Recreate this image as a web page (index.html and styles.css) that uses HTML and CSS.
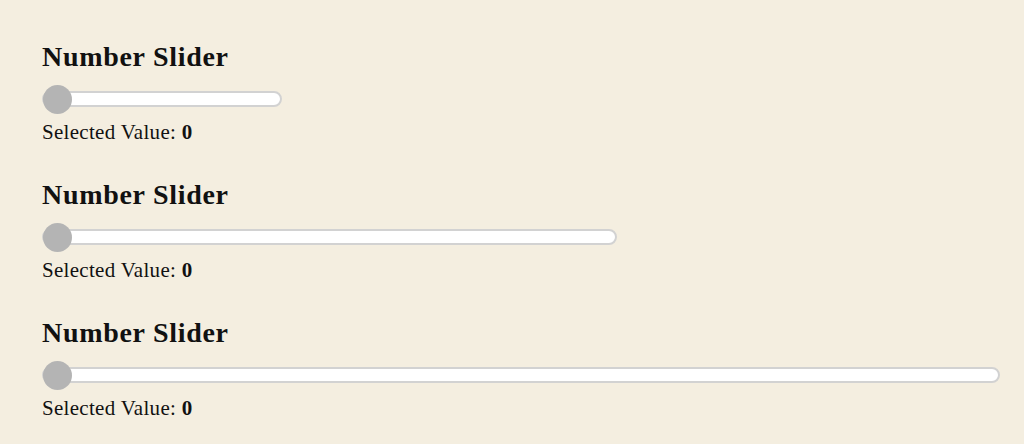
FILE: index.html
```html
<!DOCTYPE html>
<html lang="en">
<head>
    <meta charset="UTF-8">
    <title>Number Slider</title>
    <link rel="stylesheet" href="styles.css">
</head>
<body>
    <div class="sliders">
        <div class="slider-block">
            <h2>Number Slider</h2>
            <input type="range" class="slider small" min="0" max="100" value="0">
            <p>Selected Value: <b>0</b></p>
        </div>
        <div class="slider-block">
            <h2>Number Slider</h2>
            <input type="range" class="slider medium" min="0" max="100" value="0">
            <p>Selected Value: <b>0</b></p>
        </div>
        <div class="slider-block">
            <h2>Number Slider</h2>
            <input type="range" class="slider large" min="0" max="100" value="0">
            <p>Selected Value: <b>0</b></p>
        </div>
    </div>
</body>
</html>
```

FILE: styles.css
```css
/* Page */
body {
    margin: 0;
    padding: 42px 24px 0 42px;
    background: #f4eee0;
    font-family: 'Liberation Serif', 'DejaVu Serif', serif;
    color: #111;
}

.sliders {
    display: flex;
    flex-direction: column;
    gap: 37px;
}

.slider-block h2 {
    margin: 0 0 12px;
    font-size: 28px;
    font-weight: bold;
    line-height: 30px;
    letter-spacing: 0.7px;
}

.slider-block p {
    margin: 7px 0 0;
    font-size: 21px;
    line-height: 22px;
    letter-spacing: 0.3px;
}

/* Range input */
.slider {
    -webkit-appearance: none;
    appearance: none;
    display: block;
    margin: 0;
    height: 30px;
    background: transparent;
}

.slider.small { width: 25%; }
.slider.medium { width: 60%; }
.slider.large { width: 100%; }

.slider::-webkit-slider-runnable-track {
    height: 16px;
    box-sizing: border-box;
    background: #fff;
    border: 2px solid #d2d2d2;
    border-radius: 8px;
}

.slider::-webkit-slider-thumb {
    -webkit-appearance: none;
    width: 29px;
    height: 29px;
    margin-top: -8.5px;
    margin-left: -1px;
    border-radius: 50%;
    background: #b4b4b4;
    border: none;
}
```
